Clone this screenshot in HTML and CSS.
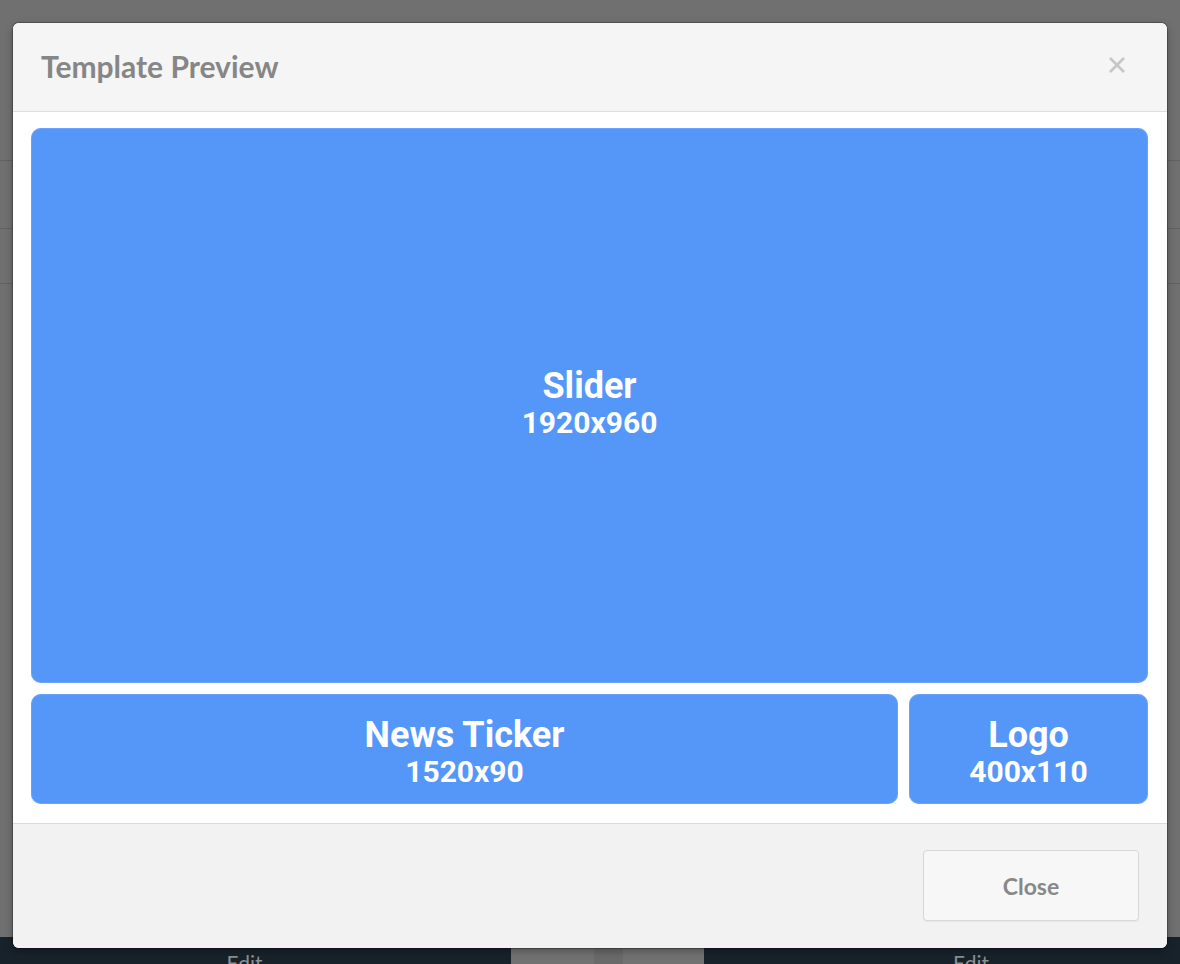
FILE: index.html
```html
<!DOCTYPE html>
<html>
<head>
<meta charset="utf-8">
<link rel="stylesheet" href="styles.css">
</head>
<body>
<div class="page">
  <div class="bg-top"></div>
  <div class="bg-row r1"></div>
  <div class="bg-row r2"></div>
  <div class="bg-row r3"></div>
  <div class="bg-fill"></div>
  <div class="bg-bar">
    <div class="bar-cell left"><span>Edit</span></div>
    <div class="bar-mid"><div class="mid-a"></div><div class="mid-b"></div><div class="mid-c"></div></div>
    <div class="bar-cell right"><span>Edit</span></div>
  </div>
</div>

<div class="modal">
  <div class="modal-header">
    <h4 class="modal-title">Template Preview</h4>
    <button class="modal-x" aria-label="close">
      <svg width="18" height="18" viewBox="0 0 18 18"><path d="M2 2 L16 16 M16 2 L2 16" stroke="#c6c6c6" stroke-width="2.6" stroke-linecap="butt"/></svg>
    </button>
  </div>
  <div class="modal-body">
    <div class="zones">
      <div class="zone slider"><div class="zname">Slider</div><div class="zsize">1920x960</div></div>
      <div class="zone ticker"><div class="zname">News Ticker</div><div class="zsize">1520x90</div></div>
      <div class="zone logo"><div class="zname">Logo</div><div class="zsize">400x110</div></div>
    </div>
  </div>
  <div class="modal-footer">
    <button class="btn-close">Close</button>
  </div>
</div>
</body>
</html>
```
FILE: styles.css
```css
html, body {
  margin: 0;
  padding: 0;
  width: 1180px;
  height: 964px;
  overflow: hidden;
  background: #707070;
  font-family: "Lato", "Liberation Sans", sans-serif;
}
.page {
  display: flex;
  flex-direction: column;
  height: 964px;
}
.bg-top { height: 160px; }
.bg-row { border-top: 1px solid #626262; }
.r1 { height: 67px; }
.r2 { height: 54px; }
.r3 { height: 0; }
.bg-fill { flex: 1; }
.bg-bar {
  height: 27px;
  background: #17222b;
  display: flex;
}
.bar-cell {
  display: flex;
  justify-content: center;
  color: #8a8f94;
  font-size: 21px;
  padding-top: 15px;
  line-height: 22px;
  box-sizing: border-box;
}
.bar-cell.left { width: 511px; padding-right: 22px; }
.bar-cell.right { flex: 1; padding-left: 58px; }
.bar-mid { width: 193px; display: flex; }
.mid-a { width: 83px; background: #727272; }
.mid-b { width: 29px; background: #6a6a6a; }
.mid-c { flex: 1; background: #727272; }

.modal {
  position: absolute;
  left: 13px;
  top: 23px;
  width: 1154px;
  height: 925px;
  background: #fff;
  border-radius: 6px;
  box-shadow: 0 0 0 1px rgba(0,0,0,0.25), 0 3px 8px rgba(0,0,0,0.3);
  display: flex;
  flex-direction: column;
  overflow: hidden;
}
.modal-header {
  height: 89px;
  flex: none;
  box-sizing: border-box;
  background: #f5f5f5;
  border-bottom: 1px solid #dedede;
  display: flex;
  align-items: center;
  justify-content: space-between;
  padding: 0 41px 0 28px;
}
.modal-title {
  margin: 0;
  font-family: "Lato", sans-serif;
  font-weight: 700;
  font-size: 30px;
  color: #868686;
  padding-bottom: 2px;
}
.modal-x {
  border: 0;
  background: none;
  padding: 0;
  width: 18px;
  height: 18px;
  margin-bottom: 5px;
  display: flex;
}
.modal-body {
  flex: 1;
  padding: 16px 19px 17px 18px;
  border-bottom: 1px solid #dadada;
}
.zones {
  display: grid;
  grid-template-columns: 867px 239px;
  grid-template-rows: 555px 110px;
  gap: 11px;
}
.zone {
  background: #5597f8;
  border-radius: 10px;
  display: flex;
  flex-direction: column;
  align-items: center;
  justify-content: center;
  color: #fff;
  font-family: "Roboto", "Liberation Sans", sans-serif;
  font-weight: 700;
  box-shadow: inset 0 0 0 1px rgba(120,170,250,0.6);
}
.slider { grid-column: 1 / span 2; padding-bottom: 6px; }
.zname { font-size: 36px; line-height: 40px; }
.zsize { font-size: 30px; line-height: 34px; }
.ticker .zname, .logo .zname { margin-top: 6px; }
.modal-footer {
  height: 124px;
  flex: none;
  background: #f2f2f2;
  display: flex;
  justify-content: flex-end;
  align-items: flex-start;
  padding: 26px 28px 0 0;
  box-sizing: border-box;
}
.btn-close {
  width: 216px;
  height: 71px;
  background: #f7f7f7;
  border: 1px solid #d8d8d8;
  border-radius: 4px;
  box-shadow: 0 1px 1px rgba(0,0,0,0.05);
  font-family: "Lato", sans-serif;
  font-size: 23px;
  font-weight: 700;
  color: #888;
}
```
